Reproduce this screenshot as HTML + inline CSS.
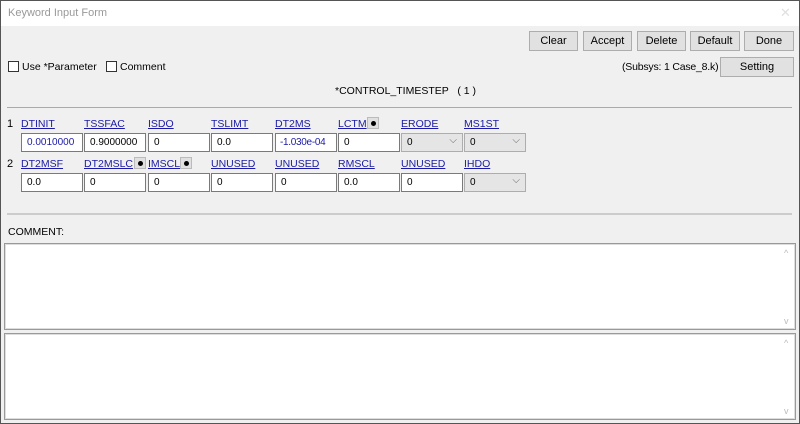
<!DOCTYPE html><html><head><style>
*{box-sizing:border-box;margin:0;padding:0}
body{width:800px;height:424px;overflow:hidden;background:#f0f0f0;font-family:"Liberation Sans",sans-serif;font-size:11px;color:#000;position:relative}
.a{position:absolute;white-space:nowrap}
.win{left:0;top:0;width:800px;height:424px;border:1px solid #555}
.title{left:1px;top:1px;width:798px;height:25px;background:#fff;color:#999;font-size:11px;padding:6px 7px}
.btn{background:#e1e1e1;border:1px solid #adadad;text-align:center;line-height:18px;font-size:11px}
.cb{width:11px;height:11px;border:1px solid #333;background:#fff}
.lbl{color:#1a1aa6;text-decoration:underline;font-size:10.5px}
.in{background:#fff;border:1px solid #7a7a7a;height:19px;width:62px;padding:3px 5px;font-size:10px;overflow:hidden}
.sel{background:#e5e5e5;border:1px solid #adadad;height:19px;width:62px;padding:3px 5px;font-size:10px}
.sel:after{content:"⌵";position:absolute;right:5px;top:1px;color:#666;font-size:10px}
.dot{width:12px;height:12px;background:#e0e0e0;border:1px solid #bbb}
.dot:after{content:"";position:absolute;left:3px;top:3px;width:5px;height:5px;border-radius:50%;background:#000}
.ta{background:#fff;border:1px solid #999;box-shadow:inset 0 0 0 1px #ddd}
</style></head><body>
<div class="a win"></div>
<div class="a title">Keyword Input Form</div>
<div class="a" style="left:780px;top:5px;color:#e0e0e0;font-size:13px">✕</div>
<div class="a btn" style="left:529px;top:31px;width:49px;height:20px">Clear</div>
<div class="a btn" style="left:583px;top:31px;width:49px;height:20px">Accept</div>
<div class="a btn" style="left:637px;top:31px;width:49px;height:20px">Delete</div>
<div class="a btn" style="left:690px;top:31px;width:50px;height:20px">Default</div>
<div class="a btn" style="left:744px;top:31px;width:50px;height:20px">Done</div>
<div class="a" style="left:622px;top:61px;font-size:10.5px;letter-spacing:-0.2px">(Subsys: 1 Case_8.k)</div>
<div class="a btn" style="left:720px;top:57px;width:74px;height:20px">Setting</div>
<div class="a cb" style="left:8px;top:61px"></div><div class="a" style="left:22px;top:61px;font-size:10.5px">Use *Parameter</div>
<div class="a cb" style="left:106px;top:61px"></div><div class="a" style="left:120px;top:61px;font-size:10.5px">Comment</div>
<div class="a" style="left:335px;top:85px;font-size:10.5px">*CONTROL_TIMESTEP &nbsp;&nbsp;( 1 )</div>
<div class="a" style="left:7px;top:107px;width:785px;height:1px;background:#aaa"></div>
<div class="a" style="left:7px;top:118px">1</div>
<div class="a" style="left:7px;top:158px">2</div>
<div class="a lbl" style="left:21px;top:118px">DTINIT</div>
<div class="a lbl" style="left:84px;top:118px">TSSFAC</div>
<div class="a lbl" style="left:148px;top:118px">ISDO</div>
<div class="a lbl" style="left:211px;top:118px">TSLIMT</div>
<div class="a lbl" style="left:275px;top:118px">DT2MS</div>
<div class="a lbl" style="left:338px;top:118px">LCTM</div><div class="a dot" style="left:367px;top:117px"></div>
<div class="a lbl" style="left:401px;top:118px">ERODE</div>
<div class="a lbl" style="left:464px;top:118px">MS1ST</div>
<div class="a in" style="left:21px;top:133px;color:#1a1aa6">0.0010000</div>
<div class="a in" style="left:84px;top:133px">0.9000000</div>
<div class="a in" style="left:148px;top:133px">0</div>
<div class="a in" style="left:211px;top:133px">0.0</div>
<div class="a in" style="left:275px;top:133px;color:#1a1aa6;padding-left:4px;letter-spacing:-0.3px">-1.030e-04</div>
<div class="a in" style="left:338px;top:133px">0</div>
<div class="a sel" style="left:401px;top:133px">0</div>
<div class="a sel" style="left:464px;top:133px">0</div>
<div class="a lbl" style="left:21px;top:158px">DT2MSF</div>
<div class="a lbl" style="left:84px;top:158px">DT2MSLC</div><div class="a dot" style="left:134px;top:157px"></div>
<div class="a lbl" style="left:148px;top:158px">IMSCL</div><div class="a dot" style="left:180px;top:157px"></div>
<div class="a lbl" style="left:211px;top:158px">UNUSED</div>
<div class="a lbl" style="left:275px;top:158px">UNUSED</div>
<div class="a lbl" style="left:338px;top:158px">RMSCL</div>
<div class="a lbl" style="left:401px;top:158px">UNUSED</div>
<div class="a lbl" style="left:464px;top:158px">IHDO</div>
<div class="a in" style="left:21px;top:173px">0.0</div>
<div class="a in" style="left:84px;top:173px">0</div>
<div class="a in" style="left:148px;top:173px">0</div>
<div class="a in" style="left:211px;top:173px">0</div>
<div class="a in" style="left:275px;top:173px">0</div>
<div class="a in" style="left:338px;top:173px">0.0</div>
<div class="a in" style="left:401px;top:173px">0</div>
<div class="a sel" style="left:464px;top:173px">0</div>
<div class="a" style="left:7px;top:213px;width:785px;height:2px;background:#ccc"></div>
<div class="a" style="left:8px;top:226px;font-size:10.5px">COMMENT:</div>
<div class="a ta" style="left:4px;top:243px;width:792px;height:87px"></div>
<div class="a" style="left:784px;top:248px;color:#bbb;font-size:9px">^</div>
<div class="a" style="left:784px;top:316px;color:#bbb;font-size:9px">v</div>
<div class="a ta" style="left:4px;top:333px;width:792px;height:87px"></div>
<div class="a" style="left:784px;top:338px;color:#bbb;font-size:9px">^</div>
<div class="a" style="left:784px;top:406px;color:#bbb;font-size:9px">v</div>
</body></html>
